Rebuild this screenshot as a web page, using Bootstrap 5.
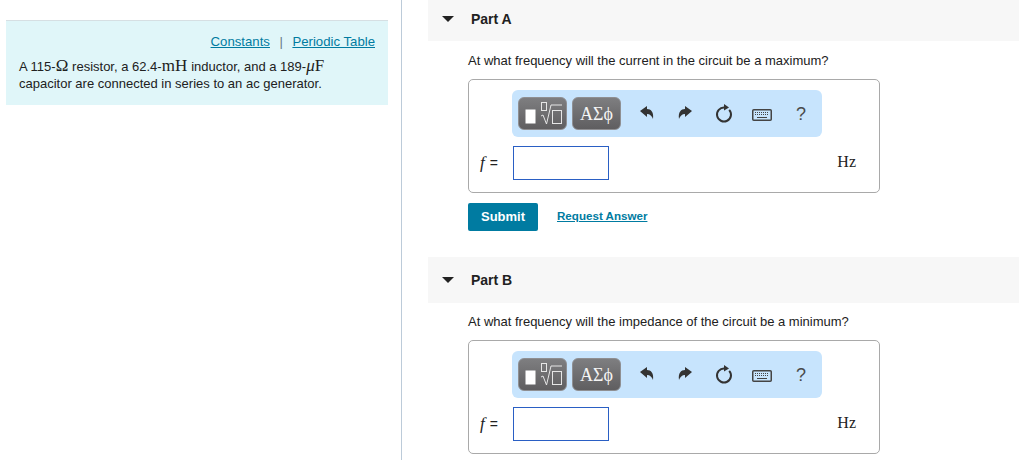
<!DOCTYPE html>
<html lang="en">
<head>
<meta charset="utf-8">
<title>Parts</title>
<link href="https://cdn.jsdelivr.net/npm/bootstrap@5.3.0/dist/css/bootstrap.min.css" rel="stylesheet">
<style>
html,body{height:460px;overflow:hidden;background:#fff}
body{font-family:"Liberation Sans",Arial,sans-serif;font-size:13px;line-height:16px;color:#212121}
.shell{height:460px}
.left-pane{width:402px;flex:none;border-right:1px solid #bccbd9;padding:20px 13px 0 6px}
.info-box{height:85px;background:#e0f6f9;border-top:1px solid #d6dfe3;padding:13px 13px 0 13px}
.info-links{text-align:right;color:#6a7d85;margin-bottom:8px;font-size:13.2px}
.info-links a,.req-link{color:#007ba1}
.info-links span{margin:0 9.5px}
.info-text{line-height:17px}
.mth{font-family:"Liberation Serif",serif;font-size:17px;line-height:1px;letter-spacing:.2px}
.right-pane{flex:1;padding-left:26px;min-width:0}
.part-head{background:#f7f7f7;display:flex;align-items:center;font-weight:700;font-size:14px;color:#212121}
.part-a{height:41px;padding-bottom:3px}
.part-b{height:46px;padding-bottom:1px}
.tri{width:0;height:0;border-left:6px solid transparent;border-right:6px solid transparent;border-top:6px solid #222;margin:0 17px 0 14px}
.part-body{padding-left:40px}
.question{margin-top:11px;height:26px}
.q-first{margin-top:12px}
.answer-box{width:412px;height:114px;border:1px solid #a9a9a9;border-radius:5px;padding:10px 0 0 43px}
.tool-bar{width:310px;height:47px;background:#c7e4fd;border-radius:6px;padding:7px 0 0 6px;align-items:flex-start}
.tool-btn{height:33px;border-radius:6px;background:linear-gradient(#7e7e80,#5f5e60);border:1px solid #8f8f92;color:#f4f4f4;display:flex;align-items:center;justify-content:center}
.tool-a{width:49px;margin-right:5px}
.tool-b{width:49px;font-family:"Liberation Serif",serif;font-size:18px}
.tool-ic{flex:none;display:block;color:#333}
.ic1{margin-left:19px}.ic2{margin-left:22px}.ic3{margin-left:21px}.ic4{margin-left:19px}
.qmark{margin-left:24px;font-size:18px;color:#4a4a4a;line-height:34px}
.answer-row{margin-top:9px;height:34px;align-items:center}
.lbl{width:34px;margin-left:-33px;flex:none;font-size:14px;white-space:nowrap}
.lbl i{font-family:"Liberation Serif",serif;font-size:17px;margin-right:5px;margin-left:1px}
.ans-input{width:96px;height:34px;margin-left:0;border:1px solid #2a5fc4;background:#fff;flex:none}
.unit{margin-left:auto;margin-right:23px;margin-top:-2px;font-family:"Liberation Serif",serif;font-size:16px;color:#222}
.submit-row{margin-top:10px;height:28px;margin-bottom:26px}
.btn-go{width:70px;height:28px;background:#007ba1;color:#fff;font-weight:700;font-size:13px;border:0;border-radius:2px;padding:0;line-height:28px}
.btn-go:hover{background:#007ba1;color:#fff}
.req-link{font-weight:700;font-size:11.6px;margin-left:19px;margin-top:-2px}
</style>
</head>
<body>
<div class="shell d-flex">
  <div class="left-pane">
    <div class="info-box">
      <div class="info-links"><a href="#">Constants</a><span>|</span><a href="#">Periodic Table</a></div>
      <div class="info-text">A 115-<span class="mth">Ω</span> resistor, a 62.4-<span class="mth">mH</span> inductor, and a 189-<span class="mth"><i>μ</i>F</span><br>capacitor are connected in series to an ac generator.</div>
    </div>
  </div>
  <div class="right-pane">
    <div class="part-head part-a"><span class="tri"></span>Part A</div>
    <div class="part-body">
      <div class="question q-first">At what frequency will the current in the circuit be a maximum?</div>
      <div class="answer-box">
        <div class="tool-bar d-flex">
          <div class="tool-btn tool-a"><svg width="42" height="28" viewBox="0 0 42 28" fill="none" stroke="#e6e6e6"><rect x="3.500" y="9.500" width="10" height="14" fill="#fff" stroke="none"/><rect x="19.500" y="2.500" width="5" height="8"/><path d="M19 16l2-1 3.500 9 4.500-19h11"/><rect x="30.500" y="10.500" width="9" height="13"/></svg></div>
          <div class="tool-btn tool-b">ΑΣϕ</div>
          <svg class="tool-ic ic1" width="16" height="32" viewBox="0 0 16 32" fill="#333"><path d="M0 14L7 9V12C11 12 14 15 13 22C12 19 10 17 7 17V20Z"/></svg>
          <svg class="tool-ic ic2" width="16" height="32" viewBox="0 0 16 32" fill="#333"><path d="M14 14L7 9V12C3 12 0 15 1 22C2 19 4 17 7 17V20Z"/></svg>
          <svg class="tool-ic ic3" width="18" height="32" viewBox="0 0 18 32" fill="none" stroke="#333" stroke-width="2"><path d="M9.500 10.500A7 7 0 1 0 14.200 12.800"/><path d="M9 7L14 10.500L9 13.500Z" fill="#333" stroke="none"/></svg>
          <svg class="tool-ic ic4" width="20" height="32" viewBox="0 0 20 32" fill="none" stroke="#444"><rect x=".75" y="12.750" width="18.500" height="10.500" rx="1" stroke-width="1.500"/><path d="M3 15.500h14M3 17.500h14" stroke-dasharray="1 1"/><path d="M5 20.500h10"/></svg>
          <span class="qmark">?</span>
        </div>
        <div class="answer-row d-flex"><div class="lbl"><i>f</i>=</div><div class="ans-input"></div><div class="unit">Hz</div></div>
      </div>
      <div class="submit-row d-flex align-items-center"><button class="btn btn-go">Submit</button><a href="#" class="req-link">Request Answer</a></div>
    </div>
    <div class="part-head part-b"><span class="tri"></span>Part B</div>
    <div class="part-body">
      <div class="question">At what frequency will the impedance of the circuit be a minimum?</div>
      <div class="answer-box">
        <div class="tool-bar d-flex">
          <div class="tool-btn tool-a"><svg width="42" height="28" viewBox="0 0 42 28" fill="none" stroke="#e6e6e6"><rect x="3.500" y="9.500" width="10" height="14" fill="#fff" stroke="none"/><rect x="19.500" y="2.500" width="5" height="8"/><path d="M19 16l2-1 3.500 9 4.500-19h11"/><rect x="30.500" y="10.500" width="9" height="13"/></svg></div>
          <div class="tool-btn tool-b">ΑΣϕ</div>
          <svg class="tool-ic ic1" width="16" height="32" viewBox="0 0 16 32" fill="#333"><path d="M0 14L7 9V12C11 12 14 15 13 22C12 19 10 17 7 17V20Z"/></svg>
          <svg class="tool-ic ic2" width="16" height="32" viewBox="0 0 16 32" fill="#333"><path d="M14 14L7 9V12C3 12 0 15 1 22C2 19 4 17 7 17V20Z"/></svg>
          <svg class="tool-ic ic3" width="18" height="32" viewBox="0 0 18 32" fill="none" stroke="#333" stroke-width="2"><path d="M9.500 10.500A7 7 0 1 0 14.200 12.800"/><path d="M9 7L14 10.500L9 13.500Z" fill="#333" stroke="none"/></svg>
          <svg class="tool-ic ic4" width="20" height="32" viewBox="0 0 20 32" fill="none" stroke="#444"><rect x=".75" y="12.750" width="18.500" height="10.500" rx="1" stroke-width="1.500"/><path d="M3 15.500h14M3 17.500h14" stroke-dasharray="1 1"/><path d="M5 20.500h10"/></svg>
          <span class="qmark">?</span>
        </div>
        <div class="answer-row d-flex"><div class="lbl"><i>f</i>=</div><div class="ans-input"></div><div class="unit">Hz</div></div>
      </div>
    </div>
  </div>
</div>
<script src="https://cdn.jsdelivr.net/npm/bootstrap@5.3.0/dist/js/bootstrap.bundle.min.js"></script>
</body>
</html>
